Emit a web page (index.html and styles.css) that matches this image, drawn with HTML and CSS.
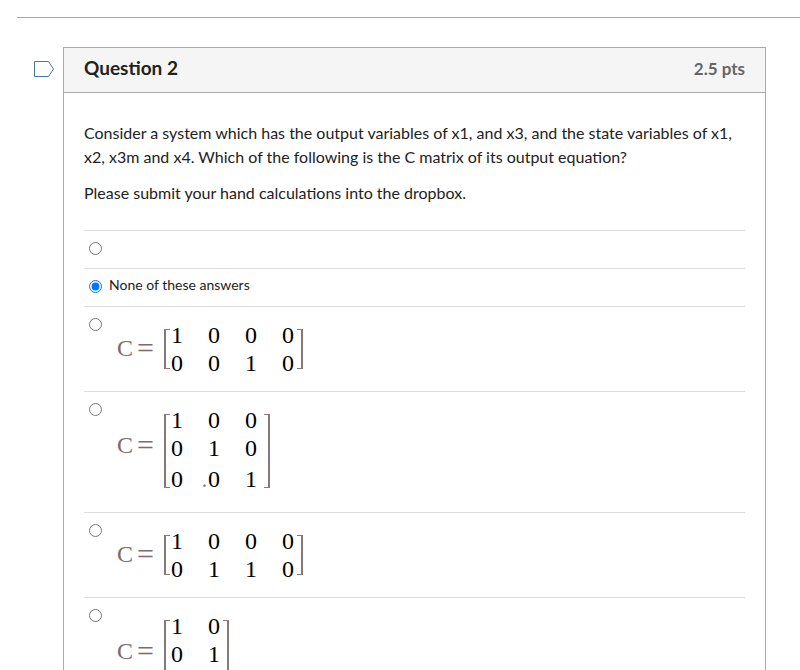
FILE: index.html
```html
<!DOCTYPE html>
<html lang="en">
<head>
    <meta charset="UTF-8">
    <meta name="viewport" content="width=device-width, initial-scale=1.0">
    <title>Question 2</title>
    <link rel="stylesheet" href="styles.css">
</head>
<body>
    <main class="quiz">
        <div class="question-row">
            <button type="button" class="flag" aria-label="Flag question">
                <svg width="20" height="16" viewBox="0 0 20 16" fill="none" stroke="#44799a">
                    <path d="M0.5 0.5H14.5L19.5 8L14.5 15.5H0.5Z"/>
                </svg>
            </button>
            <section class="question">
                <header class="question-header">
                    <h2>Question 2</h2>
                    <span class="points">2.5 pts</span>
                </header>
                <form class="question-body">
                    <p>Consider a system which has the output variables of x1, and x3, and the state variables of x1, x2, x3m and x4. Which of the following is the C matrix of its output equation?</p>
                    <p>Please submit your hand calculations into the dropbox.</p>
                    <div class="answers">
                        <div class="answer">
                            <input type="radio" name="answer" id="answer1" aria-label="Blank answer">
                        </div>
                        <div class="answer">
                            <input type="radio" name="answer" id="answer2" checked>
                            <label for="answer2">None of these answers</label>
                        </div>
                        <div class="answer">
                            <input type="radio" name="answer" id="answer3">
                            <label for="answer3" class="equation">
                                <span class="name">C <span class="equals">=</span></span>
                                <span class="bracket left"></span>
                                <span class="matrix cols4">
                                    <span>1</span><span>0</span><span>0</span><span>0</span>
                                    <span>0</span><span>0</span><span>1</span><span>0</span>
                                </span>
                                <span class="bracket right"></span>
                            </label>
                        </div>
                        <div class="answer">
                            <input type="radio" name="answer" id="answer4">
                            <label for="answer4" class="equation tall">
                                <span class="name">C <span class="equals">=</span></span>
                                <span class="bracket left"></span>
                                <span class="matrix cols3">
                                    <span>1</span><span>0</span><span>0</span>
                                    <span>0</span><span>1</span><span>0</span>
                                    <span>0</span><span class="dotted"><i>.</i>0</span><span>1</span>
                                </span>
                                <span class="bracket right"></span>
                            </label>
                        </div>
                        <div class="answer">
                            <input type="radio" name="answer" id="answer5">
                            <label for="answer5" class="equation">
                                <span class="name">C <span class="equals">=</span></span>
                                <span class="bracket left"></span>
                                <span class="matrix cols4">
                                    <span>1</span><span>0</span><span>0</span><span>0</span>
                                    <span>0</span><span>1</span><span>1</span><span>0</span>
                                </span>
                                <span class="bracket right"></span>
                            </label>
                        </div>
                        <div class="answer">
                            <input type="radio" name="answer" id="answer6">
                            <label for="answer6" class="equation tall">
                                <span class="name">C <span class="equals">=</span></span>
                                <span class="bracket left"></span>
                                <span class="matrix cols2">
                                    <span>1</span><span>0</span>
                                    <span>0</span><span>1</span>
                                </span>
                                <span class="bracket right"></span>
                            </label>
                        </div>
                    </div>
                </form>
            </section>
        </div>
    </main>
</body>
</html>
```

FILE: styles.css
```css
* {
    box-sizing: border-box;
}
html {
    scrollbar-width: none;
}
body {
    margin: 0;
    background: #fff;
    color: #222;
    font-family: Lato, "Liberation Sans", sans-serif;
    font-size: 16px;
    line-height: 24px;
}
.quiz {
    margin: 17px 0 0 17px;
    padding: 29px 34px 24px 17px;
    border-top: 1px solid #a5a5a5;
}
.question-row {
    display: flex;
    align-items: flex-start;
    gap: 9px;
}
.flag {
    display: flex;
    margin-top: 14px;
    padding: 0;
    border: 0;
    background: none;
}
.question {
    flex: 1;
    border: 1px solid #aaa;
}
.question-header {
    display: flex;
    justify-content: space-between;
    align-items: center;
    height: 45px;
    padding: 0 20px 2px;
    background: #f5f5f5;
    border-bottom: 1px solid #aaa;
}
.question-header h2 {
    margin: 0 0 2px;
    font-size: 19px;
    font-weight: bold;
}
.points {
    color: #666;
    font-size: 17px;
    font-weight: bold;
}
.question-body {
    padding: 28px 20px 20px;
}
.question-body p {
    margin: 0 0 12px;
}
.answers {
    margin-top: 25px;
}
.answer {
    display: flex;
    align-items: flex-start;
    min-height: 38px;
    border-top: 1px solid #ddd;
    font-size: 14px;
}
.answer input {
    width: 13px;
    height: 13px;
    margin: 11px 7px 0 5px;
}
.answer label {
    padding-top: 4px;
}

/* matrices */
.answer .equation {
    display: flex;
    margin-left: 8px;
    padding: 14px 0;
    color: #000;
    font-family: "Liberation Serif", serif;
    font-size: 24px;
    line-height: 28px;
}
.name {
    display: flex;
    align-items: center;
    gap: 4px;
    width: 47px;
    padding-bottom: 2px;
    color: #7d6b6b;
}
.equals {
    font-size: 30px;
}
.tall .name {
    padding-bottom: 12px;
}
.matrix {
    display: grid;
    grid-auto-rows: 28px;
    column-gap: 13px;
    margin: 0 -6px;
    padding: 0 3px 0 1px;
    text-align: center;
}
.answer .tall {
    padding-bottom: 16px;
}
.tall .matrix {
    grid-template-rows: 28px 28px 34px;
    align-items: center;
}
.cols4 {
    grid-template-columns: repeat(4, 24px);
}
.cols3 {
    grid-template-columns: repeat(3, 24px);
    padding-right: 7px;
}
.cols2 {
    grid-template-columns: repeat(2, 24px);
}
.bracket {
    width: 6px;
    margin: 8px 0;
    border: 1px solid #8a7878;
}
.left {
    border-left-width: 2px;
    border-right: 0;
}
.right {
    border-right-width: 2px;
    border-left: 0;
}
.dotted {
    position: relative;
}
.dotted i {
    position: absolute;
    left: 0;
    color: #888;
}
```
